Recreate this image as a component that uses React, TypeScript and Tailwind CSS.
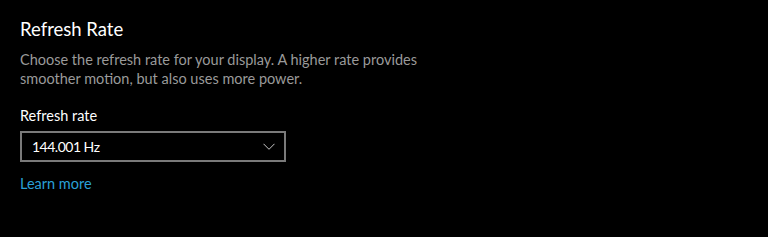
export default function App() {
  return (
    <div className="w-[768px] h-[237px] bg-black text-white overflow-hidden" style={{ fontFamily: 'Lato, "Noto Sans", sans-serif' }}>
      <div className="flex flex-col pl-[20px] pt-[16px]">
        <h2 className="text-[18.5px] leading-[26px] text-white">Refresh Rate</h2>
        <p className="mt-[8px] w-[420px] text-[14.5px] leading-[19px] text-[#9a9a9a]">
          Choose the refresh rate for your display. A higher rate provides smoother motion, but also uses more power.
        </p>
        <label className="mt-[18px] text-[14.5px] leading-[20px] text-white">Refresh rate</label>
        <div className="mt-[5px] flex h-[31px] w-[266px] items-center justify-between border-2 border-[#7a7a7a] pl-[10px] pr-[9px]">
          <span className="text-[14px] tracking-[-0.5px] text-white">144.001 Hz</span>
          <svg width="12" height="7" viewBox="0 0 12 7" fill="none">
            <path d="M0.5 0.8l5.5 5.5 5.5-5.5" stroke="#c8c8c8" strokeWidth="1" />
          </svg>
        </div>
        <a className="mt-[12px] text-[14.5px] leading-[20px] text-[#2aa0d8] cursor-pointer">Learn more</a>
      </div>
    </div>
  );
}
